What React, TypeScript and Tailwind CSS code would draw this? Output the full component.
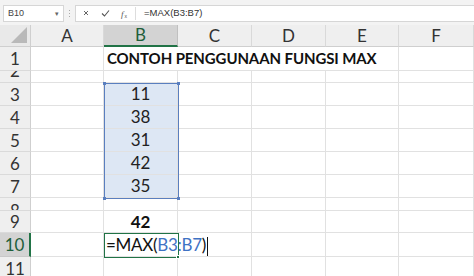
import React from "react";

const cols = ["A", "B", "C", "D", "E", "F"];
const colW = [73, 74, 74, 74, 73, 75];
const rowH = [24, 12, 23, 23, 23, 23, 23, 13, 22, 24, 24];

const font = { fontFamily: "Lato, 'Open Sans', 'Liberation Sans', sans-serif" };

function Cell({ r, c }: { r: number; c: number }) {
  const inSel = c === 1 && r >= 3 && r <= 7;
  let content: React.ReactNode = null;
  const nums: Record<number, string> = { 3: "11", 4: "38", 5: "31", 6: "42", 7: "35" };
  if (c === 1 && nums[r]) {
    content = <span className="text-[17px] text-[#222]">{nums[r]}</span>;
  }
  if (c === 1 && r === 9) {
    content = <span className="text-[17px] font-bold text-[#111]">42</span>;
  }
  return (
    <div
      className={`flex items-center justify-center border-r border-b border-[#e1e1e1] ${inSel ? "bg-[#dde7f4]" : "bg-white"}`}
    >
      {content}
    </div>
  );
}

export default function App() {
  return (
    <div className="w-[474px] h-[276px] overflow-hidden bg-white" style={font}>
      {/* formula bar */}
      <div className="h-[25px] bg-[#f3f3f3] flex items-start pt-[5px] pl-[3px]">
        <div className="w-[61px] h-[17px] bg-white border border-[#d6d6d6] flex items-center justify-between px-[4px]">
          <span className="text-[9px] text-[#444]" style={{ fontFamily: "'Liberation Sans', sans-serif" }}>B10</span>
          <span className="text-[7px] text-[#666] leading-none">▾</span>
        </div>
        <div className="w-[11px] flex flex-col items-center justify-center h-[17px] gap-[2px]">
          <span className="w-[1px] h-[1px] bg-[#aaa]" />
          <span className="w-[1px] h-[1px] bg-[#aaa]" />
          <span className="w-[1px] h-[1px] bg-[#aaa]" />
        </div>
        <div className="flex-1 h-[17px] bg-white border border-[#d6d6d6] border-r-0 flex items-center">
          <svg width="60" height="17" viewBox="0 0 60 17" className="shrink-0">
            <path d="M8 6 L12 10 M12 6 L8 10" stroke="#666" strokeWidth="1" fill="none" />
            <path d="M26 8.5 L28.5 11 L33 5.5" stroke="#555" strokeWidth="1.1" fill="none" />
            <text x="45" y="11.5" fontSize="9" fontStyle="italic" fill="#555" fontFamily="Liberation Serif, serif">f</text>
            <text x="48.5" y="12.5" fontSize="5" fill="#555" fontFamily="Liberation Sans, sans-serif">x</text>
            <line x1="59.5" y1="2" x2="59.5" y2="15" stroke="#ddd" strokeWidth="1" />
          </svg>
          <span className="ml-[8px] text-[9.5px] text-[#333]" style={{ fontFamily: "'Liberation Sans', sans-serif" }}>=MAX(B3:B7)</span>
        </div>
      </div>

      {/* grid */}
      <div className="relative">
        <div
          className="grid"
          style={{
            gridTemplateColumns: `31px ${colW.map((w) => w + "px").join(" ")}`,
            gridTemplateRows: `22px ${rowH.map((h) => h + "px").join(" ")}`,
          }}
        >
          {/* corner */}
          <div className="bg-[#e9e9e9] border-r border-b border-[#cfcfcf] relative">
            <div
              className="absolute right-[3px] bottom-[3px] w-0 h-0 border-l-[16px] border-l-transparent border-b-[16px] border-b-[#b9b9b9]"
            />
          </div>
          {cols.map((c) => (
            <div
              key={c}
              className={`flex items-center justify-center text-[17px] border-r ${
                c === "B"
                  ? "bg-[#d3d3d3] text-[#1e5e3a] border-b-2 border-b-[#217346] border-r-[#c0c0c0]"
                  : "bg-[#efefef] text-[#333] border-b border-b-[#cfcfcf] border-r-[#d9d9d9]"
              }`}
            >
              {c}
            </div>
          ))}

          {rowH.map((h, i) => {
            const r = i + 1;
            const rowHeader = (
              <div
                key={`h${r}`}
                className={`relative flex items-center justify-center overflow-hidden text-[17px] border-b ${
                  r === 10
                    ? "bg-[#d3d3d3] text-[#1e5e3a] border-r-2 border-r-[#217346] border-b-[#c8c8c8]"
                    : "bg-[#efefef] text-[#333] border-r border-r-[#cfcfcf] border-b-[#dadada]"
                }`}
              >
                {r === 2 ? (
                  <span className="absolute left-0 right-0 text-center leading-[17px] top-[-9px]">2</span>
                ) : r === 8 ? (
                  <span className="absolute left-0 right-0 text-center leading-[17px] top-[4px]">8</span>
                ) : (
                  <span className="leading-none">{r}</span>
                )}
              </div>
            );
            if (r === 1) {
              return (
                <React.Fragment key={r}>
                  {rowHeader}
                  <div className="bg-white border-r border-b border-[#e1e1e1]" />
                  <div className="col-span-4 bg-white border-r border-b border-[#e1e1e1] flex items-center pl-[3px]">
                    <span className="text-[15px] font-bold text-[#111] whitespace-nowrap tracking-[-0.1px]">
                      CONTOH PENGGUNAAN FUNGSI MAX
                    </span>
                  </div>
                  <div className="bg-white border-r border-b border-[#e1e1e1]" />
                </React.Fragment>
              );
            }
            if (r === 10) {
              return (
                <React.Fragment key={r}>
                  {rowHeader}
                  <div className="bg-white border-r border-b border-[#e1e1e1]" />
                  <div className="bg-white border-b border-[#e1e1e1] relative overflow-visible z-10">
                    <span className="absolute left-[2px] top-[1px] text-[17px] tracking-[-0.3px] text-[#111] whitespace-nowrap leading-[22px]">
                      =MAX(<span className="text-[#3f72c4]">B3:B7</span>)
                      <span className="inline-block w-[1px] h-[19px] bg-[#111] align-middle ml-[1px]" />
                    </span>
                  </div>
                  <div className="bg-white border-r border-b border-[#e1e1e1]" />
                  <div className="bg-white border-r border-b border-[#e1e1e1]" />
                  <div className="bg-white border-r border-b border-[#e1e1e1]" />
                  <div className="bg-white border-r border-b border-[#e1e1e1]" />
                </React.Fragment>
              );
            }
            return (
              <React.Fragment key={r}>
                {rowHeader}
                {cols.map((_, c) => (
                  <Cell key={c} r={r} c={c} />
                ))}
              </React.Fragment>
            );
          })}
        </div>

        {/* selection range B3:B7 */}
        <div className="absolute left-[104px] top-[58px] w-[75px] h-[116px] border border-[#5a7fbf] pointer-events-none">
          <span className="absolute -left-[2px] -top-[2px] w-[3px] h-[3px] bg-[#5a7fbf]" />
          <span className="absolute -right-[2px] -top-[2px] w-[3px] h-[3px] bg-[#5a7fbf]" />
          <span className="absolute -left-[2px] -bottom-[2px] w-[3px] h-[3px] bg-[#5a7fbf]" />
          <span className="absolute -right-[2px] -bottom-[2px] w-[3px] h-[3px] bg-[#5a7fbf]" />
        </div>

        {/* active cell B10 */}
        <div className="absolute left-[104px] top-[208px] w-[75px] h-[25px] border border-[#217346] pointer-events-none z-20">
          <span className="absolute -right-[2px] -bottom-[2px] w-[4px] h-[4px] bg-[#217346] border border-white" />
        </div>
      </div>
    </div>
  );
}
